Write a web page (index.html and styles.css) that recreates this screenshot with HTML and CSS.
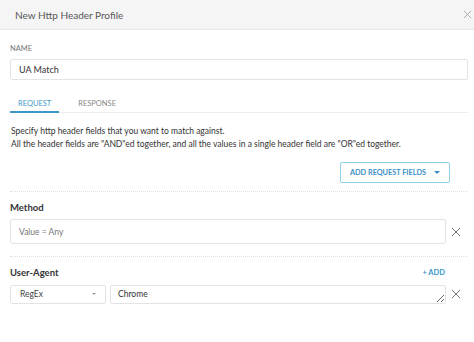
FILE: index.html
```html
<!DOCTYPE html>
<html lang="en">
<head>
    <meta charset="UTF-8">
    <title>New Http Header Profile</title>
    <link rel="stylesheet" href="styles.css">
</head>
<body>
    <div class="modal">
        <div class="modal-header">
            <span class="modal-title">New Http Header Profile</span>
            <button class="close-btn" title="Close">
                <svg width="9" height="9" viewBox="0 0 10 10"><path d="M1 1L9 9M9 1L1 9" stroke="#aaa" stroke-width="1.1"/></svg>
            </button>
        </div>
        <div class="modal-body">
            <label class="field-label" for="profileName">NAME</label>
            <input type="text" id="profileName" class="text-input name-input" value="UA Match">

            <div class="tabs">
                <span class="tab active">REQUEST</span>
                <span class="tab">RESPONSE</span>
            </div>

            <p class="hint">Specify http header fields that you want to match against.<br>All the header fields are "AND"ed together, and all the values in a single header field are "OR"ed together.</p>

            <div class="actions">
                <button class="add-fields-btn">ADD REQUEST FIELDS <span class="caret"></span></button>
            </div>

            <div class="separator"></div>

            <div class="field-head">
                <span class="field-name">Method</span>
            </div>
            <div class="field-row">
                <input type="text" class="text-input method-input" placeholder="Value = Any">
                <button class="remove-btn" title="Remove">
                    <svg width="10" height="10" viewBox="0 0 10 10"><path d="M1 1L9 9M9 1L1 9" stroke="#777" stroke-width="1"/></svg>
                </button>
            </div>

            <div class="separator separator-wide"></div>

            <div class="field-head">
                <span class="field-name">User-Agent</span>
                <span class="add-link">+ ADD</span>
            </div>
            <div class="field-row">
                <div class="select-box">
                    <span>RegEx</span>
                    <span class="select-caret"></span>
                </div>
                <textarea class="text-input value-area">Chrome</textarea>
                <button class="remove-btn" title="Remove">
                    <svg width="10" height="10" viewBox="0 0 10 10"><path d="M1 1L9 9M9 1L1 9" stroke="#777" stroke-width="1"/></svg>
                </button>
            </div>
        </div>
    </div>
</body>
</html>
```

FILE: styles.css
```css
body {
    margin: 0;
    font-family: Lato, "Open Sans", sans-serif;
    background-color: #fff;
    color: #333;
}
.modal {
    width: 474px;
}
.modal-header {
    display: flex;
    justify-content: space-between;
    align-items: center;
    height: 29px;
    padding: 0 1px 0 15px;
    background-color: #f5f5f5;
    border-bottom: 1px solid #e6e6e6;
}
.modal-title {
    font-size: 10px;
    color: #555;
}
.close-btn, .remove-btn {
    border: none;
    background: none;
    padding: 0;
    cursor: pointer;
    display: flex;
    align-items: center;
    justify-content: center;
}
.close-btn {
    width: 12px;
    height: 12px;
}
.modal-body {
    padding: 0 6px 0 10px;
}
.field-label {
    display: block;
    font-size: 7.5px;
    color: #777;
    margin-top: 14px;
    line-height: 10px;
}
.text-input {
    box-sizing: border-box;
    border: 1px solid #e3e3e3;
    border-radius: 2px;
    font-family: Lato, "Open Sans", sans-serif;
    color: #333;
    background: #fff;
    outline: none;
}
.name-input {
    width: 100%;
    height: 21px;
    margin-top: 5px;
    padding: 0 8px;
    font-size: 9px;
}
.tabs {
    display: flex;
    margin-top: 14px;
    border-bottom: 1px solid #ececec;
}
.tab {
    font-size: 7.5px;
    color: #888;
    padding: 5px 8px 3px 8px;
    margin-right: 11px;
    line-height: 9px;
}
.tab.active {
    color: #3b98c8;
    border-bottom: 2px solid #3b98c8;
    margin-bottom: -1px;
}
.hint {
    margin: 12px 0 0 1px;
    font-size: 8.5px;
    line-height: 12.5px;
    color: #333;
}
.actions {
    display: flex;
    justify-content: flex-end;
    padding-right: 18px;
    margin-top: 12px;
}
.add-fields-btn {
    height: 21px;
    padding: 0 9px 0 9px;
    border: 1px solid #8fd0ea;
    border-radius: 2px;
    background: #fff;
    color: #3b8fc4;
    font-family: Lato, "Open Sans", sans-serif;
    font-size: 7.3px;
    font-weight: bold;
    display: flex;
    align-items: center;
    cursor: pointer;
}
.caret {
    display: inline-block;
    margin-left: 8px;
    border-left: 3px solid transparent;
    border-right: 3px solid transparent;
    border-top: 3px solid #3b8fc4;
}
.separator {
    border-top: 1px dotted #dedede;
    margin-top: 8px;
}
.separator-wide {
    margin-top: 12px;
}
.field-head {
    display: flex;
    justify-content: space-between;
    align-items: center;
    margin-top: 10px;
    padding-right: 23px;
}
.field-name {
    font-size: 9.5px;
    font-weight: bold;
    color: #333;
}
.add-link {
    font-size: 7.5px;
    font-weight: bold;
    color: #3b98c8;
}
.field-row {
    display: flex;
    align-items: center;
    margin-top: 6px;
}
.method-input {
    flex: 1;
    height: 25px;
    padding: 0 8px;
    font-size: 8.5px;
}
.method-input::placeholder {
    color: #777;
}
.remove-btn {
    width: 22px;
    height: 20px;
    justify-content: flex-start;
    padding-left: 5px;
}
.select-box {
    box-sizing: border-box;
    width: 96px;
    height: 19px;
    border: 1px solid #e3e3e3;
    border-radius: 2px;
    display: flex;
    justify-content: space-between;
    align-items: center;
    padding: 0 9px 0 9px;
    font-size: 8.5px;
    color: #444;
    margin-right: 4px;
}
.select-caret {
    border-left: 2px solid transparent;
    border-right: 2px solid transparent;
    border-top: 2px solid #999;
}
.value-area {
    flex: 1;
    height: 19px;
    padding: 3px 7px 0 7px;
    font-size: 8.5px;
    resize: vertical;
    line-height: 11px;
}
```
